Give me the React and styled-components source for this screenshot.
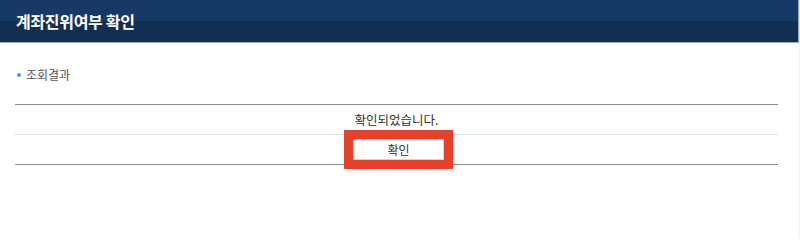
import React from 'react';
import styled, { createGlobalStyle } from 'styled-components';

// colours
const navyTop = '#163a65';
const navyBottom = '#112f51';
const lineDark = '#8c8c8c';
const lineLight = '#e2e2e2';
const highlight = '#e8412b';

const GlobalStyle = createGlobalStyle`
  body {
    margin: 0;
    background: #fff;
    font-family: "Noto Sans CJK KR", "Noto Sans", sans-serif;
  }
`

const Page = styled.div`
  width: 800px;
  height: 238px;
  box-sizing: border-box;
  border-right: 1px solid #eef0f3;
`

const Header = styled.header`
  height: 42px;
  display: flex;
  align-items: center;
  padding-left: 16px;
  background: linear-gradient(180deg, ${navyTop} 0%, ${navyTop} 50%, ${navyBottom} 50%, ${navyBottom} 100%);
  border-bottom: 1px solid #a3b0c0;
  border-right: 1px solid #9aabbd;
`

const Title = styled.h1`
  margin: 0;
  color: #fff;
  font-size: 16px;
  font-weight: 700;
  letter-spacing: -0.3px;
`

const Content = styled.div`
  padding: 23px 21px 0 15px;
`

const SectionTitle = styled.h2`
  display: flex;
  align-items: center;
  gap: 5px;
  margin: 0 0 20px 2px;
  font-size: 12px;
  font-weight: 400;
  color: #555;
  line-height: 18px;
  &::before {
    content: '';
    width: 4px;
    height: 4px;
    border-radius: 50%;
    background: #3d9af0;
  }
`

const Table = styled.div`
  border-top: 1px solid ${lineDark};
  border-bottom: 1px solid ${lineDark};
`

const Row = styled.div`
  height: ${p => p.$h}px;
  display: flex;
  align-items: center;
  justify-content: center;
  font-size: 12.5px;
  color: #333;
  & + & {
    border-top: 1px solid ${lineLight};
  }
`

const ConfirmButton = styled.button`
  width: 91px;
  height: 21px;
  margin-left: 4px;
  padding: 0;
  border: 1px solid #f2c9c0;
  background: #fff;
  font-family: inherit;
  font-size: 12px;
  color: #333;
  outline: 9px solid ${highlight};
  cursor: pointer;
`

function App() {
  return (
    <Page>
      <GlobalStyle />
      <Header>
        <Title>계좌진위여부 확인</Title>
      </Header>
      <Content>
        <SectionTitle>조회결과</SectionTitle>
        <Table>
          <Row $h={29}>확인되었습니다.</Row>
          <Row $h={29}>
            <ConfirmButton>확인</ConfirmButton>
          </Row>
        </Table>
      </Content>
    </Page>
  );
}

export default App;
